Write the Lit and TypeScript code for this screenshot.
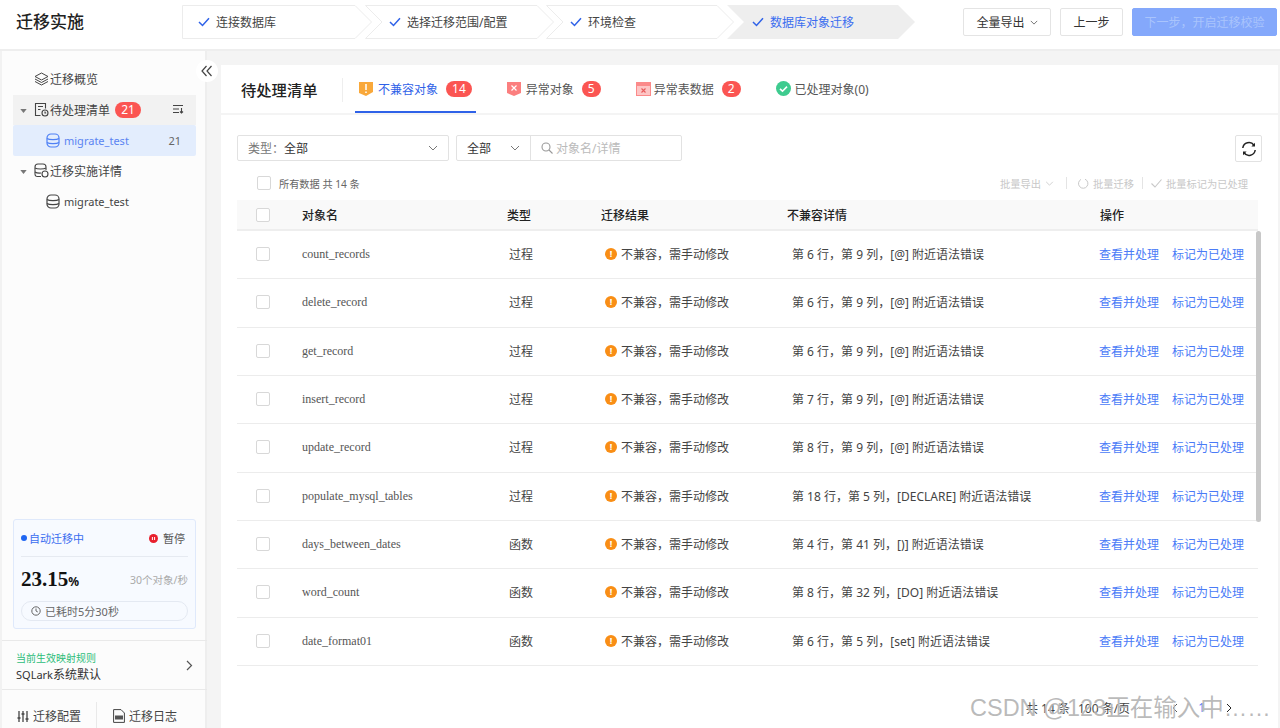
import { LitElement, html, css } from "lit";
import { customElement } from "lit/decorators.js";

const check = html`<svg class="ck" width="12" height="10" viewBox="0 0 12 10"><path d="M1 5l3.5 3.5L11 1.2" fill="none" stroke="#2f62e8" stroke-width="1.5"/></svg>`;
const chev = (c = "#666", w = 10) => html`<svg width="${w}" height="${Math.round(w * 0.6)}" viewBox="0 0 10 6"><path d="M1 1l4 4 4-4" fill="none" stroke="${c}" stroke-width="1"/></svg>`;
const dbIcon = (c: string) => html`<svg width="14" height="15" viewBox="0 0 14 15" fill="none" stroke="${c}" stroke-width="1.2"><rect x="1" y="1" width="12" height="13" rx="4"/><path d="M1 5.5c2 1.6 10 1.6 12 0M1 9.5c2 1.6 10 1.6 12 0"/></svg>`;
const caret = html`<svg class="caret" width="7" height="4" viewBox="0 0 8 5"><path d="M0 0h8L4 5z" fill="#777"/></svg>`;

const steps = [
  { t: "连接数据库", w: 191, pts: "0.5,0.5 173,0.5 189.5,17 173,33.5 0.5,33.5", pad: 16 },
  { t: "选择迁移范围/配置", w: 189, pts: "0.5,0.5 172,0.5 188.5,17 172,33.5 0.5,33.5 17,17", pad: 24 },
  { t: "环境检查", w: 189, pts: "0.5,0.5 171,0.5 187.5,17 171,33.5 0.5,33.5 17,17", pad: 24 },
  { t: "数据库对象迁移", w: 188, pts: "0,0 171,0 188,17 171,34 0,34 17,17", pad: 25, active: true },
];

const rows = [
  ["count_records", "过程", "第 6 行，第 9 列，", "[@]"],
  ["delete_record", "过程", "第 6 行，第 9 列，", "[@]"],
  ["get_record", "过程", "第 6 行，第 9 列，", "[@]"],
  ["insert_record", "过程", "第 7 行，第 9 列，", "[@]"],
  ["update_record", "过程", "第 8 行，第 9 列，", "[@]"],
  ["populate_mysql_tables", "过程", "第 18 行，第 5 列，", "[DECLARE]"],
  ["days_between_dates", "函数", "第 4 行，第 41 列，", "[)]"],
  ["word_count", "函数", "第 8 行，第 32 列，", "[DO]"],
  ["date_format01", "函数", "第 6 行，第 5 列，", "[set]"],
];

@customElement("app-root")
export class AppRoot extends LitElement {
  static styles = css`
    :host { display: block; width: 1280px; height: 728px; overflow: hidden; position: relative; background: #fff;
      font-family: "Noto Sans", "Noto Sans CJK SC", sans-serif; font-size: 12px; color: #444; }
    * { box-sizing: border-box; }
    svg { flex: none; display: block; }
    .top { height: 51px; display: flex; align-items: flex-start; border-bottom: 2px solid #eeeeee; padding-top: 5px; }
    .title { width: 182px; flex: none; padding: 4px 0 0 16px; font-size: 17px; font-weight: 500; color: #222; line-height: 26px; }
    .steps { display: flex; width: 772px; flex: none; }
    .step { position: relative; height: 34px; display: flex; align-items: center; margin-right: -8px; flex: none; color: #444; }
    .step > svg.bg { position: absolute; left: 0; top: 0; }
    .step .ck { position: relative; margin-right: 6px; }
    .step span { position: relative; }
    .step.active span { color: #3a6df0; }
    .btns { display: flex; gap: 9px; margin: 3px 0 0 9px; flex: none; }
    .btn { height: 28px; border: 1px solid #e4e4e4; border-radius: 2px; display: flex; align-items: center; justify-content: center; gap: 5px; color: #333; background: #fff; }
    .b1 { width: 88px; } .b2 { width: 63px; }
    .b3 { width: 145px; background: #84a8fb; border-color: #84a8fb; color: #a9c4fc; }
    .body { display: flex; height: 677px; }
    .side { width: 207px; flex: none; background: #fcfcfc; border-right: 2px solid #eee; border-left: 2px solid #f2f2f2; display: flex; flex-direction: column; }
    .tree { flex: 1; padding: 13px 9px 0 11px; }
    .node { height: 30.5px; display: flex; align-items: center; color: #444; position: relative; }
    .node .ic { margin-right: 1px; }
    .node.l1 { padding-left: 21px; }
    .node.grp { background: #f2f2f2; }
    .node.sel { background: #e3edfd; border-radius: 2px; color: #5b84f2; }
    .node.sub { padding-left: 33px; gap: 4px; font-size: 11px; }
    .caret { position: absolute; left: 7px; top: 14px; }
    .red { background: #fb5552; color: #fff; border-radius: 9px; height: 16px; line-height: 16px; text-align: center; font-size: 12px; }
    .node .red { width: 26px; margin-left: 5px; }
    .end { margin-left: auto; margin-right: 15px; color: #666; font-size: 11px; }
    .sortic { position: absolute; right: 12px; top: 9px; }
    .prog { margin: 0 9px 11px 11px; height: 110px; flex: none; background: #f7faff; border: 1px solid #dfe9fb; border-radius: 3px; padding: 0 7px; }
    .p1 { display: flex; align-items: center; height: 37px; border-bottom: 1px solid #e6eaf1; }
    .dot { width: 6px; height: 6px; border-radius: 50%; background: #1f66f2; margin-right: 2px; }
    .p1 .auto { color: #3a6df0; font-size: 11px; }
    .pause { margin-left: auto; margin-right: 5px; }
    .p1 .stop { margin-right: 3px; font-size: 11px; color: #555; }
    .p2 { display: flex; justify-content: space-between; align-items: center; height: 44px; }
    .pct { font-family: "Liberation Serif", serif; font-weight: 700; font-size: 21px; color: #111; }
    .pct small { font-family: "Noto Sans", sans-serif; font-size: 12px; }
    .rate { font-size: 10.5px; color: #aaa; }
    .pill { height: 20px; border: 1px solid #e4e9f2; border-radius: 10px; display: flex; align-items: center; gap: 4px; padding-left: 9px; font-size: 11px; color: #666; }
    .rule { height: 50px; flex: none; border-top: 1px solid #e9e9e9; border-bottom: 1px solid #e9e9e9; margin-right: -2px; display: flex; align-items: center; justify-content: space-between; padding: 0 14px 0 14px; line-height: 16px; }
    .rule .txt { padding-top: 2px; }
    .rule .g { color: #2dbd7a; font-size: 10px; }
    .rule .n { color: #333; margin-top: 1px; }
    .rule .n span { font-size: 11px; }
    .foot { height: 52px; margin-bottom: -14px; flex: none; display: flex; align-items: center; color: #444; }
    .foot div { display: flex; align-items: center; gap: 4px; height: 28px; }
    .f1 { width: 95px; padding-left: 15px; border-right: 1px solid #e9e9e9; }
    .f2 { padding-left: 16px; }
    .collapse { position: absolute; left: 196px; top: 60px; width: 22px; height: 22px; border-radius: 50%; background: #fff; display: flex; align-items: center; justify-content: center; }
    .main { flex: 1; background: #f4f4f4; padding: 14px 2px 0 14px; min-width: 0; }
    .cardA { height: 48px; background: #fff; display: flex; align-items: center; padding-left: 20px; }
    .cardA h2 { margin: 1px 0 0; font-size: 15.3px; font-weight: 500; color: #222; width: 102px; border-right: 1px solid #eee; line-height: 24px; }
    .tabs { display: flex; gap: 27px; height: 100%; margin-left: 12px; }
    .tab { display: flex; align-items: center; padding: 1px 4px 0; gap: 5px; height: 100%; color: #555; border-bottom: 2px solid transparent; }
    .tab.on { color: #2f62e8; border-bottom-color: #2f62e8; }
    .tab .red { margin-left: 3px; padding: 0 6px; min-width: 18px; }
    .tab .tight { margin-right: -2px; }
    .tab .done { margin-left: -1px; }
    .cardB { margin-top: 2px; height: 613px; background: #fff; padding: 20px 20px 0 16px; position: relative; }
    .filters { display: flex; height: 27px; }
    .sel1 { width: 212px; height: 26px; border: 1px solid #e2e2e2; border-radius: 2px; display: flex; align-items: center; justify-content: space-between; padding: 0 10px; color: #333; }
    .sel1 i { font-style: normal; color: #777; }
    .grp2 { margin-left: 7px; width: 226px; height: 26px; border: 1px solid #e2e2e2; border-radius: 2px; display: flex; align-items: center; }
    .g1 { width: 74px; height: 100%; border-right: 1px solid #e2e2e2; display: flex; align-items: center; justify-content: space-between; padding: 0 10px; color: #333; }
    .g2 { display: flex; align-items: center; gap: 3px; padding-left: 10px; color: #bbb; }
    .refresh { margin-left: auto; margin-right: -4px; width: 27px; height: 27px; border: 1px solid #e2e2e2; border-radius: 2px; display: flex; align-items: center; justify-content: center; }
    .bar { height: 38px; display: flex; align-items: center; padding: 4px 10px 0 20px; font-size: 10.2px; color: #666; }
    .cb { width: 14px; height: 14px; border: 1px solid #d8d8d8; border-radius: 2px; background: #fff; flex: none; }
    .bar .cb { margin-right: 8px; }
    .acts { margin-left: auto; display: flex; align-items: center; color: #c8c8c8; font-size: 10.25px; gap: 4px; }
    .sep { width: 1px; height: 12px; background: #e4e4e4; margin: 0 4px; }
    .sep.wide { margin: 0 7px 0 8px; }
    .tbl { position: relative; }
    .tr { display: grid; grid-template-columns: 65px 205px 94px 186px 313px 158px; align-items: center; height: 48.33px; padding-bottom: 1px; border-bottom: 1px solid #ececec; }
    .tr .cb { margin-left: 19px; }
    .th { height: 31px; padding-bottom: 0; background: #f9f9f9; border-bottom: 2px solid #eee; color: #222; font-weight: 500; }
    .name { font-family: "Liberation Serif", serif; color: #555; padding-top: 1px; }
    .type { padding-left: 2px; }
    .res { display: flex; align-items: center; gap: 4px; padding-left: 4px; color: #444; }
    .warn { width: 12px; height: 12px; border-radius: 50%; background: #f98e15; color: #fff; font-size: 9px; line-height: 12px; text-align: center; font-weight: 700; }
    .det { padding-left: 5px; color: #444; }
    .det b { font-weight: 400; }
    .ops { display: flex; gap: 13px; color: #4a7bf7; margin-left: -1px; }
    .sb { position: absolute; right: -3px; top: 31px; width: 5px; height: 291px; background: #c8c8c8; border-radius: 3px; }
    .pager { display: flex; align-items: center; justify-content: flex-end; height: 20px; margin: 32px 26px 0 0; color: #444; }
    .pager .pg { color: #4a7bf7; margin: 0 21px 0 20px; }
    .pager .sz { display: flex; align-items: center; gap: 3px; margin: 0 32px 0 8px; }
    .mark { position: absolute; left: 970px; top: 692px; font-size: 23.5px; line-height: 32px; color: rgba(160,160,160,.72); white-space: nowrap; font-family: "Liberation Sans", "Noto Sans CJK SC", sans-serif; text-shadow: 0 0 1px rgba(255,255,255,.8); }
  `;

  render() {
    return html`
      <div class="top">
        <div class="title">迁移实施</div>
        <div class="steps">
          ${steps.map(s => html`<div class="step ${s.active ? "active" : ""}" style="width:${s.w}px;padding-left:${s.pad}px">
            <svg class="bg" width="${s.w}" height="34" viewBox="0 0 ${s.w} 34"><polygon points="${s.pts}" fill="${s.active ? "#eeeeee" : "#fff"}" stroke="${s.active ? "none" : "#ececec"}"/></svg>
            ${check}<span>${s.t}</span></div>`)}
        </div>
        <div class="btns">
          <div class="btn b1">全量导出 ${chev("#555", 8)}</div>
          <div class="btn b2">上一步</div>
          <div class="btn b3">下一步，开启迁移校验</div>
        </div>
      </div>
      <div class="body">
        <aside class="side">
          <div class="tree">
            <div class="node l1">
              <svg class="ic" width="15" height="14" viewBox="0 0 15 14" fill="none" stroke="#444" stroke-width="1"><path d="M7.5 1L14 4.5 7.5 8 1 4.5zM1 7l6.5 3.5L14 7M1 9.5L7.5 13 14 9.5"/></svg>迁移概览</div>
            <div class="node l1 grp">${caret}
              <svg class="ic" width="15" height="15" viewBox="0 0 15 15" fill="none" stroke="#444" stroke-width="1.1"><path d="M6.5 13.5H1.5v-12h10v5"/><path d="M4 4.5h5M4 7.5h2.5"/><circle cx="11" cy="11" r="3"/><path d="M11 9.5V11h1.2"/></svg>待处理清单
              <span class="red">21</span>
              <svg class="sortic" width="11" height="11" viewBox="0 0 11 11" fill="none" stroke="#444" stroke-width="1.1"><path d="M0 1.5h10M0 5h6M0 8.5h6M8.5 4v5M7 7.5l1.5 1.5 1.5-1.5"/></svg>
            </div>
            <div class="node sub sel">${dbIcon("#4f80f5")}migrate_test<span class="end">21</span></div>
            <div class="node l1">${caret}
              <svg class="ic" width="15" height="15" viewBox="0 0 15 15" fill="none" stroke="#444" stroke-width="1.1"><path d="M7 13.5H3.5a2.5 2.5 0 0 1-2.5-2.5V4a3 3 0 0 1 3-3h5a3 3 0 0 1 3 3v3"/><path d="M1 5c2 1.4 9 1.4 11 0M1 9c1.5 1 4 1.2 6 1"/><circle cx="11" cy="11" r="3"/></svg>迁移实施详情</div>
            <div class="node sub">${dbIcon("#444")}migrate_test</div>
          </div>
          <div class="prog">
            <div class="p1"><span class="dot"></span><span class="auto">自动迁移中</span>
              <svg class="pause" width="9" height="9" viewBox="0 0 9 9"><circle cx="4.5" cy="4.5" r="4.5" fill="#e8202e"/><path d="M3.4 3v3M5.6 3v3" stroke="#fff" stroke-width="1"/></svg>
              <span class="stop">暂停</span></div>
            <div class="p2"><span class="pct">23.15<small>%</small></span><span class="rate">30个对象/秒</span></div>
            <div class="pill"><svg width="10" height="10" viewBox="0 0 10 10" fill="none" stroke="#666"><circle cx="5" cy="5" r="4.2"/><path d="M5 2.5V5l1.8 1"/></svg>已耗时5分30秒</div>
          </div>
          <div class="rule">
            <div class="txt"><div class="g">当前生效映射规则</div><div class="n"><span>SQLark</span>系统默认</div></div>
            <svg width="7" height="11" viewBox="0 0 7 11"><path d="M1 1l4.5 4.5L1 10" fill="none" stroke="#555" stroke-width="1.2"/></svg>
          </div>
          <div class="foot">
            <div class="f1"><svg width="12" height="13" viewBox="0 0 12 13" fill="none" stroke="#444" stroke-width="1.3"><path d="M2 1v11M6 1v11M10 1v11"/><path d="M.5 8h3M4.5 4h3M8.5 9h3"/></svg>迁移配置</div>
            <div class="f2"><svg width="12" height="14" viewBox="0 0 12 14"><path d="M.6.6H8L11.4 4v9.4H.6z" fill="none" stroke="#444"/><rect x="2" y="6.5" width="8" height="4" fill="#555"/></svg>迁移日志</div>
          </div>
        </aside>
        <main class="main">
          <section class="cardA">
            <h2>待处理清单</h2>
            <div class="tabs">
              <div class="tab on"><svg width="14" height="15" viewBox="0 0 14 15"><path d="M0 1h14v10l-7 4-7-3z" fill="#f9a83a"/><path d="M7 3v6M7 10.5v1.5" stroke="#fff" stroke-width="1.5"/></svg>不兼容对象<span class="red">14</span></div>
              <div class="tab"><svg width="14" height="15" viewBox="0 0 14 15"><path d="M0 1h14v11l-7 3-7-3z" fill="#fb7f7f"/><path d="M4.5 4.5l5 5M9.5 4.5l-5 5" stroke="#fff" stroke-width="1.2"/></svg>异常对象<span class="red">5</span></div>
              <div class="tab"><svg class="tight" width="15" height="14" viewBox="0 0 15 14"><rect width="15" height="14" fill="#fb8a8a"/><rect x="1" y="4" width="13" height="9" fill="#fdc5c5"/><path d="M5.5 6.5l4 4M9.5 6.5l-4 4" stroke="#e85a5a" stroke-width="1.1"/></svg>异常表数据<span class="red">2</span></div>
              <div class="tab"><svg width="15" height="15" viewBox="0 0 15 15"><circle cx="7.5" cy="7.5" r="7.5" fill="#3ecb8f"/><path d="M4 7.8l2.5 2.4L11 5.6" fill="none" stroke="#fff" stroke-width="1.6"/></svg><span class="done">已处理对象(0)</span></div>
            </div>
          </section>
          <section class="cardB">
            <div class="filters">
              <div class="sel1"><span><i>类型：</i>全部</span>${chev("#777", 10)}</div>
              <div class="grp2">
                <div class="g1">全部 ${chev("#777", 10)}</div>
                <div class="g2"><svg width="12" height="12" viewBox="0 0 12 12" fill="none" stroke="#999" stroke-width="1.1"><circle cx="5" cy="5" r="4"/><path d="M8 8l3.5 3.5"/></svg>对象名/详情</div>
              </div>
              <div class="refresh"><svg width="16" height="16" viewBox="0 0 16 16" fill="none" stroke="#222" stroke-width="1.5"><path d="M1.8 7A6.2 6.2 0 0 1 13 4.2M14.2 9A6.2 6.2 0 0 1 3 11.8"/><path d="M14 1.8v3.6h-3.6zM2 14.2v-3.6h3.6z" fill="#222" stroke="none"/></svg></div>
            </div>
            <div class="bar">
              <span class="cb"></span>所有数据 共 14 条
              <div class="acts">
                <span>批量导出</span>${chev("#c8c8c8", 9)}<span class="sep wide"></span>
                <svg width="11" height="11" viewBox="0 0 11 11" fill="none" stroke="#c8c8c8"><path d="M7 1.2A4.7 4.7 0 1 1 3 1.4"/></svg><span>批量迁移</span><span class="sep"></span>
                <svg width="11" height="9" viewBox="0 0 11 9" fill="none" stroke="#c8c8c8" stroke-width="1.1"><path d="M.5 4.5L4 8l6.5-7.5"/></svg><span>批量标记为已处理</span>
              </div>
            </div>
            <div class="tbl">
              <div class="tr th"><span class="cb"></span><span>对象名</span><span>类型</span><span>迁移结果</span><span>不兼容详情</span><span>操作</span></div>
              ${rows.map(r => html`<div class="tr">
                <span class="cb"></span>
                <span class="name">${r[0]}</span>
                <span class="type">${r[1]}</span>
                <span class="res"><span class="warn">!</span>不兼容，需手动修改</span>
                <span class="det">${r[2]}<b>${r[3]} 附近语法错误</b></span>
                <span class="ops"><span>查看并处理</span><span>标记为已处理</span></span>
              </div>`)}
              <div class="sb"></div>
            </div>
            <div class="pager">
              <span>共 14 条</span>
              <span class="sz">100 条/页 ${chev("#666", 7)}</span>
              <svg width="6" height="10" viewBox="0 0 6 10"><path d="M5 1L1 5l4 4" fill="none" stroke="#555"/></svg>
              <span class="pg">1</span>
              <svg width="6" height="10" viewBox="0 0 6 10"><path d="M1 1l4 4-4 4" fill="none" stroke="#222"/></svg>
            </div>
          </section>
        </main>
      </div>
      <div class="collapse"><svg width="12" height="12" viewBox="0 0 12 12" fill="none" stroke="#444" stroke-width="1.2"><path d="M5.5 1L1 6l4.5 5M10.5 1L6 6l4.5 5"/></svg></div>
      <div class="mark">CSDN @123正在输入中……</div>
    `;
  }
}
